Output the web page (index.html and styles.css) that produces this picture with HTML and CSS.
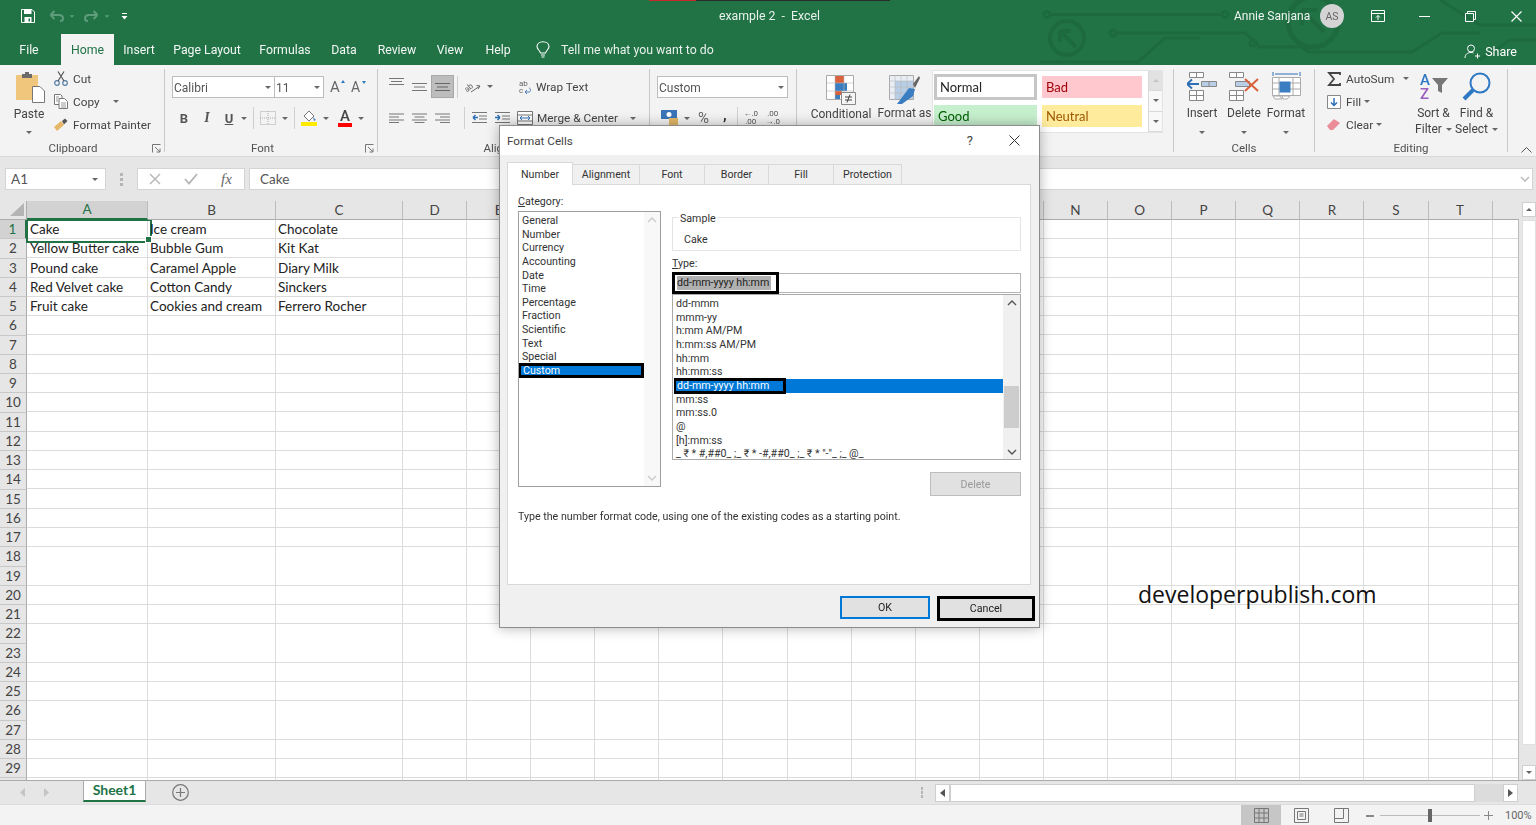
FILE: index.html
```html
<!DOCTYPE html>
<html lang="en">
<head>
<meta charset="utf-8">
<title>example 2 - Excel</title>
<link rel="stylesheet" href="styles.css">
</head>
<body>
<div class="app">
  <div class="head">
    <svg class="circuit" width="496" height="65" viewBox="0 0 496 65" fill="none" stroke="#1d6a3f" stroke-width="3">
      <path d="M10 14.500H182M76 33H205L220 47H262L268 52H372L402 33H440M0 62H98L125 38H160"/>
      <circle cx="7" cy="14.500" r="3"/><circle cx="185" cy="14.500" r="3"/><circle cx="73" cy="33" r="3"/><circle cx="213" cy="43" r="3"/>
      <circle cx="27" cy="38" r="17" stroke-width="4"/><path d="M20 31L36 47M20 31H31M20 31V42" stroke-width="4"/>
      <circle cx="273" cy="22" r="25" stroke-width="5"/><path d="M262 10L284 32M262 10H277M262 10V25" stroke-width="4"/>
      <path d="M400 0L440 25H496M440 60L470 40H496"/>
    </svg>
    <div class="topline"><span class="tl-red"></span><span class="tl-black"></span></div>
    <header class="titlebar">
      <div class="qat">
        <svg class="q-save" width="14" height="14" viewBox="0 0 14 14"><path d="M0.500 0.500H11L13.500 3V13.500H0.500Z" fill="#217346" stroke="#fff"/><path d="M3 1H10.500V5H3Z" fill="#fff"/><path d="M3.500 8H10.500V13H3.500Z" fill="#fff"/><path d="M7.500 9.500H9V12.500H7.500Z" fill="#217346"/></svg>
        <svg class="q-undo" width="15" height="12" viewBox="0 0 15 12" fill="none" stroke="#5d9d7c" stroke-width="2"><path d="M1.500 5H10C13 5 14 7 14 8.500C14 10 13 11 11 11M1.500 5L5.500 1M1.500 5L5.500 9"/></svg>
        <i class="caret dim"></i>
        <svg class="q-redo" width="15" height="12" viewBox="0 0 15 12" fill="none" stroke="#5d9d7c" stroke-width="2"><path d="M13.500 5H5C2 5 1 7 1 8.500C1 10 2 11 4 11M13.500 5L9.500 1M13.500 5L9.500 9"/></svg>
        <i class="caret dim"></i>
        <svg class="q-more" width="7" height="7" viewBox="0 0 7 7"><path d="M1 0H6V1H1ZM0.500 3H6.500L3.500 6.500Z" fill="#fff"/></svg>
      </div>
      <div class="doc-title">example 2 &nbsp;-&nbsp; Excel</div>
      <div class="account">Annie Sanjana</div>
      <div class="avatar">AS</div>
      <div class="winbtns">
        <svg width="14" height="12" viewBox="0 0 14 12" fill="none" stroke="#fff"><path d="M0.500 0.500H13.500V11.500H0.500ZM0.500 3.500H13.500M7 10V5.500M5 7.500L7 5.500L9 7.500"/></svg>
        <svg width="11" height="11" viewBox="0 0 11 11" fill="none" stroke="#fff"><path d="M0 5.500H11"/></svg>
        <svg width="11" height="11" viewBox="0 0 11 11" fill="none" stroke="#fff"><path d="M0.500 2.500H8.500V10.500H0.500ZM2.500 2.500V0.500H10.500V8.500H8.500"/></svg>
        <svg width="11" height="11" viewBox="0 0 11 11" fill="none" stroke="#fff" stroke-width="1.200"><path d="M0.500 0.500L10.500 10.500M10.500 0.500L0.500 10.500"/></svg>
      </div>
    </header>
    <nav class="tabs">
      <span class="tab first">File</span>
      <span class="tab active">Home</span>
      <span class="tab">Insert</span>
      <span class="tab">Page Layout</span>
      <span class="tab">Formulas</span>
      <span class="tab">Data</span>
      <span class="tab">Review</span>
      <span class="tab">View</span>
      <span class="tab">Help</span>
      <span class="tell">
        <svg width="14" height="17" viewBox="0 0 14 17" fill="none" stroke="#fff" stroke-width="1.100"><path d="M4.500 12C4 9.500 1 8.500 1 5.500C1 2.800 3.500 0.700 7 0.700C10.500 0.700 13 2.800 13 5.500C13 8.500 10 9.500 9.500 12ZM5 14H9M5.500 16H8.500"/></svg>
        Tell me what you want to do
      </span>
      <span class="share">
        <svg width="16" height="15" viewBox="0 0 16 15" fill="none" stroke="#fff"><circle cx="7" cy="4.500" r="3.500"/><path d="M1 14C1 10.500 3.500 8.500 7 8.500C8 8.500 9 8.700 9.500 9M11 12H16M13.500 9.500V14.500"/></svg>
        Share
      </span>
    </nav>
  </div>

  <section class="ribbon">
    <div class="group g-clip">
      <div class="body">
        <div class="paste">
          <svg width="29" height="31" viewBox="0 0 29 31"><path d="M0 3H22V28H0Z" fill="#efc67c"/><path d="M6 2H9V0H13V2H16V6H6Z" fill="#6b6b6b"/><path d="M16.500 14.500H24L28.500 19V30.500H16.500Z" fill="#fff" stroke="#777"/></svg>
          <span>Paste</span><i class="caret"></i>
        </div>
        <div class="stack">
          <div class="srow"><svg width="14" height="15" viewBox="0 0 14 15" fill="none" stroke="#5a7fa8" stroke-width="1.200"><circle cx="3" cy="12" r="2.300"/><circle cx="11" cy="12" r="2.300"/><path d="M4 10L10 0.500M10 10L4 0.500" stroke="#555"/></svg>Cut</div>
          <div class="srow"><svg width="14" height="15" viewBox="0 0 14 15" fill="#fff" stroke="#777"><path d="M0.500 0.500H6.500L8 2V10.500H0.500Z"/><path d="M5 4.500H10.500L13.500 7.500V14.500H5Z"/><path d="M2 3H5M2 5H4M2 7H4M7 9H12M7 11H12M7 13H12" fill="none" stroke="#999"/></svg>Copy<i class="caret sp"></i></div>
          <div class="srow"><svg width="14" height="14" viewBox="0 0 14 14"><path d="M0 9L7 3L10 7L3 13Z" fill="#e7b769"/><path d="M8 3L11 0.500L13.500 3L10 6.500Z" fill="#555"/></svg>Format Painter</div>
        </div>
      </div>
      <div class="glabel"><span>Clipboard</span><svg class="launch" width="9" height="9" viewBox="0 0 9 9" fill="none" stroke="#777"><path d="M0.500 8.500V0.500H8.500M3 3L8 8M8 4.500V8H4.500"/></svg></div>
    </div>

    <div class="group g-font">
      <div class="body col">
        <div class="frow r1">
          <div class="combo w103"><span>Calibri</span><i class="caret"></i></div>
          <div class="combo w51"><span>11</span><i class="caret"></i></div>
          <span class="growa">A<b class="up"></b></span>
          <span class="growa small">A<b class="dn"></b></span>
        </div>
        <div class="frow r2">
          <span class="fb">B</span><span class="fi">I</span><span class="fu">U</span><i class="caret"></i>
          <i class="vsep"></i>
          <svg width="16" height="14" viewBox="0 0 16 14" fill="none" stroke="#aaa" stroke-dasharray="1 1"><path d="M0.500 0.500H15.500V13.500H0.500ZM8 0V14M0 7H16"/></svg><i class="caret"></i>
          <i class="vsep"></i>
          <svg width="16" height="16" viewBox="0 0 16 16"><path d="M3 6L8 1L13 6L8 11Z" fill="#fff" stroke="#777"/><path d="M12 7L15 10L13 11Z" fill="#4a7ebb"/><path d="M0 12H16V16H0Z" fill="#ffeb00"/></svg><i class="caret"></i>
          <span class="fcolor">A</span><i class="caret"></i>
        </div>
      </div>
      <div class="glabel"><span>Font</span><svg class="launch" width="9" height="9" viewBox="0 0 9 9" fill="none" stroke="#777"><path d="M0.500 8.500V0.500H8.500M3 3L8 8M8 4.500V8H4.500"/></svg></div>
    </div>

    <div class="group g-align">
      <div class="body">
        <div class="alcol">
          <div class="alrow">
            <svg class="al top" width="15" height="8" viewBox="0 0 15 8" stroke="#777"><path d="M0 0.500H15M2 3.500H13M0 6.500H15"/></svg>
            <svg class="al" width="15" height="10" viewBox="0 0 15 10" stroke="#777"><path d="M0 1.500H15M2 5H13M0 8.500H15"/></svg>
            <span class="alactive"><svg width="15" height="10" viewBox="0 0 15 10" stroke="#666"><path d="M0 1.500H15M2 5H13M0 8.500H15"/></svg></span>
            <i class="vsep"></i>
            <svg class="orient" width="17" height="15" viewBox="0 0 17 15" fill="none" stroke="#666"><text class="tiny" x="0" y="12" transform="rotate(-40 3 10)">ab</text><path d="M6 13L15 7M15 7L11.500 6.500M15 7L13 10"/></svg><i class="caret"></i>
          </div>
          <div class="alrow two">
            <svg class="al" width="15" height="10" viewBox="0 0 15 10" stroke="#777"><path d="M0 1H15M0 4H10M0 7H15M0 9.500H10"/></svg>
            <svg class="al" width="15" height="10" viewBox="0 0 15 10" stroke="#777"><path d="M0 1H15M2.500 4H12.500M0 7H15M2.500 9.500H12.500"/></svg>
            <svg class="al" width="15" height="10" viewBox="0 0 15 10" stroke="#777"><path d="M0 1H15M5 4H15M0 7H15M5 9.500H15"/></svg>
            <i class="vsep"></i>
            <svg class="al" width="15" height="11" viewBox="0 0 15 11" fill="none" stroke="#777"><path d="M0 0.500H15M7 4H15M7 7H15M0 10.500H15"/><path d="M1 5.500H6M1 5.500L3.500 3M1 5.500L3.500 8" stroke="#2f6fb5" stroke-width="1.400"/></svg>
            <svg class="al" width="15" height="11" viewBox="0 0 15 11" fill="none" stroke="#777"><path d="M0 0.500H15M7 4H15M7 7H15M0 10.500H15"/><path d="M0 5.500H5M5 5.500L2.500 3M5 5.500L2.500 8" stroke="#2f6fb5" stroke-width="1.400"/></svg>
          </div>
        </div>
        <div class="wrapcol">
          <div class="srow"><svg class="wrapicon" width="13" height="14" viewBox="0 0 13 14" fill="none"><text class="tiny" x="0" y="6">ab</text><text class="tiny" x="0" y="13">c</text><path d="M6 12H10C12 12 12 8 10 8M6 12L8 10M6 12L8 14" stroke="#4a7ebb"/></svg>Wrap Text</div>
          <div class="srow low"><svg width="16" height="14" viewBox="0 0 16 14" fill="#fff" stroke="#777"><path d="M0.500 0.500H15.500V13.500H0.500ZM0 4H16M0 10H16"/><path d="M3 7H13M3 7L5 5M3 7L5 9M13 7L11 5M13 7L11 9" stroke="#2f6fb5" fill="none"/></svg>Merge &amp; Center<i class="caret sp"></i></div>
        </div>
      </div>
      <div class="glabel"><span>Alignment</span></div>
    </div>

    <div class="group g-num">
      <div class="body col">
        <div class="combo w131"><span>Custom</span><i class="caret"></i></div>
        <div class="numrow">
          <svg width="17" height="16" viewBox="0 0 17 16"><path d="M0 0H16V9H0Z" fill="#3a75b8"/><circle cx="8" cy="4.500" r="2.500" fill="#fff"/><path d="M8 8H17V16H8Z" fill="#e3b868"/></svg><i class="caret"></i>
          <span class="pct">%</span><span class="cma">,</span><i class="vsep"></i>
          <span class="dec">←.0<br>.00</span><span class="dec">.00<br>→.0</span>
        </div>
      </div>
      <div class="glabel"><span>Number</span></div>
    </div>

    <div class="group g-styles">
      <div class="body">
        <div class="bigbtn cond">
          <svg width="31" height="30" viewBox="0 0 31 30"><path d="M0.500 0.500H27.500V24.500H0.500Z" fill="#fff" stroke="#aaa"/><path d="M9 1H18V8H9Z" fill="#d9623c"/><path d="M9 8H21V16H9Z" fill="#3a7dc0"/><path d="M9 16H16V20H9Z" fill="#d9623c"/><path d="M9 20H14V24H9Z" fill="#3a7dc0"/><path d="M0 8H28M0 16H28M9 0V25M18 0V25" stroke="#bbb" fill="none" stroke-width="0.600"/><path d="M15.500 17.500H29.500V29.500H15.500Z" fill="#f5f5f5" stroke="#888"/><path d="M19 22H26M19 25H26M24 19.500L21 27.500" stroke="#444" fill="none"/></svg>
          <span>Conditional</span>
        </div>
        <div class="bigbtn fmtas">
          <svg width="31" height="29" viewBox="0 0 31 29"><path d="M0.500 0.500H24.500V24.500H0.500Z" fill="#e9eef5" stroke="#aaa"/><path d="M6 6H24V24H6Z" fill="#b8cde6"/><path d="M0 6H25M0 12H25M0 18H25M6 0V25M12 0V25M18 0V25" stroke="#bbb" stroke-width="0.600" fill="none"/><path d="M24 9L30 1L31 3L26 13Z" fill="#666"/><path d="M20 13L26 14L24 21L13 29H8Z" fill="#3a7dc0"/></svg>
          <span>Format as</span>
        </div>
        <div class="gallery">
          <div class="swatches">
            <div class="st normal">Normal</div>
            <div class="st bad">Bad</div>
            <div class="st good">Good</div>
            <div class="st neutral">Neutral</div>
          </div>
          <div class="gscroll">
            <span class="gb dis"><i class="caret up"></i></span>
            <span class="gb"><i class="caret"></i></span>
            <span class="gb more"><i class="caret"></i></span>
          </div>
        </div>
      </div>
      <div class="glabel"><span>Styles</span></div>
    </div>

    <div class="group g-cells">
      <div class="body">
        <div class="cellbtn">
          <svg width="30" height="29" viewBox="0 0 30 29" fill="#fff" stroke="#888"><path d="M2.500 0.500H16.500V5.500H2.500ZM9.500 0V6"/><path d="M14.500 9.500H29.500V14.500H14.500ZM22 9V15" fill="#b8cde6"/><path d="M2.500 18.500H16.500V28.500H2.500ZM9.500 18V29M2 23.500H17"/><path d="M0 12H12M0 12L5 7.500M0 12L5 16.500" stroke="#2f6fb5" stroke-width="2" fill="none"/></svg>
          <span>Insert</span><i class="caret"></i>
        </div>
        <div class="cellbtn">
          <svg width="30" height="29" viewBox="0 0 30 29" fill="#fff" stroke="#888"><path d="M0.500 0.500H14.500V5.500H0.500ZM7.500 0V6"/><path d="M6.500 9.500H20.500V14.500H6.500Z" fill="#b8cde6"/><path d="M0.500 18.500H14.500V28.500H0.500ZM7.500 18V29M0 23.500H15"/><path d="M16 7L29 19M29 7L16 19" stroke="#d9623c" stroke-width="2" fill="none"/></svg>
          <span>Delete</span><i class="caret"></i>
        </div>
        <div class="cellbtn">
          <svg width="29" height="29" viewBox="0 0 29 29" fill="#fff" stroke="#aaa"><path d="M0.500 5.500H28.500V23.500H0.500Z"/><path d="M7 5V24M21 5V24M0 11H29M0 17H29" fill="none"/><path d="M7.500 9.500H18.500V20.500H7.500Z" fill="#3a7dc0" stroke="none"/><path d="M1 0V4M28 0V4M3 2H26" stroke="#2f6fb5" fill="none"/><path d="M1 24H8L10 27H3ZM10 24H18L15 27H11Z" /></svg>
          <span>Format</span><i class="caret"></i>
        </div>
      </div>
      <div class="glabel"><span>Cells</span></div>
    </div>

    <div class="group g-edit">
      <div class="body">
        <div class="stack edit">
          <div class="srow"><svg width="14" height="14" viewBox="0 0 14 14" fill="none" stroke="#444" stroke-width="1.800"><path d="M13 3V1H2L7 7L2 13H13V11"/></svg>AutoSum<i class="caret far"></i></div>
          <div class="srow"><svg width="14" height="14" viewBox="0 0 14 14" fill="#fff" stroke="#888"><path d="M0.500 0.500H13.500V13.500H0.500Z"/><path d="M7 3V10M4 7.500L7 10.500L10 7.500" stroke="#2f6fb5" stroke-width="1.500" fill="none"/></svg>Fill<i class="caret tight"></i></div>
          <div class="srow"><svg width="14" height="13" viewBox="0 0 14 13"><path d="M0 8L7 1L13 5L6 12H3Z" fill="#ea8d98"/></svg>Clear<i class="caret tight"></i></div>
        </div>
        <div class="editbtn sort">
          <svg class="azicon" width="29" height="28" viewBox="0 0 29 28"><text class="az a" x="1" y="13">A</text><text class="az z" x="1" y="27">Z</text><path d="M13 6H29L23 13V21L19 19V13Z" fill="#777"/></svg>
          <span>Sort &amp;</span><span>Filter<i class="caret near"></i></span>
        </div>
        <div class="editbtn find">
          <svg width="29" height="29" viewBox="0 0 29 29" fill="none" stroke="#2f78c4"><circle cx="18" cy="11" r="9.500" stroke-width="2"/><path d="M11 18L2 27" stroke-width="4"/></svg>
          <span>Find &amp;</span><span>Select<i class="caret near"></i></span>
        </div>
      </div>
      <div class="glabel"><span>Editing</span></div>
    </div>
    <svg class="collapse" width="11" height="6" viewBox="0 0 11 6" fill="none" stroke="#555"><path d="M0.500 5.500L5.500 0.500L10.500 5.500"/></svg>
  </section>

  <div class="fbar">
    <div class="namebox"><span>A1</span><i class="caret"></i></div>
    <div class="dots"><i></i><i></i><i></i></div>
    <div class="fxbtns">
      <svg width="12" height="12" viewBox="0 0 12 12" stroke="#b5b5b5" stroke-width="1.400"><path d="M1 1L11 11M11 1L1 11"/></svg>
      <svg width="14" height="12" viewBox="0 0 14 12" fill="none" stroke="#b5b5b5" stroke-width="1.800"><path d="M1 6L5 10.500L13 1"/></svg>
      <span class="fx">fx</span>
    </div>
    <div class="formula"><span>Cake</span><svg width="10" height="6" viewBox="0 0 10 6" fill="none" stroke="#bbb" stroke-width="1.500"><path d="M1 1L5 5L9 1"/></svg></div>
  </div>

  <div class="sheet">
    <div class="colheads">
      <div class="corner"><svg width="14" height="13" viewBox="0 0 14 13"><path d="M14 0V13H0Z" fill="#b4b4b4"/></svg></div>
      <div class="ch ca sel">A</div><div class="ch cb">B</div><div class="ch cc">C</div>
      <div class="ch">D</div><div class="ch">E</div><div class="ch">F</div><div class="ch">G</div><div class="ch">H</div><div class="ch">I</div><div class="ch">J</div><div class="ch">K</div><div class="ch">L</div><div class="ch">M</div><div class="ch">N</div><div class="ch">O</div><div class="ch">P</div><div class="ch">Q</div><div class="ch">R</div><div class="ch">S</div><div class="ch">T</div><div class="ch cu"></div>
      <div class="vbtn"><i class="caret up"></i></div>
    </div>
    <div class="sbody">
      <div class="rowheads">
        <div class="rh sel">1</div><div class="rh">2</div><div class="rh">3</div><div class="rh">4</div><div class="rh">5</div><div class="rh">6</div><div class="rh">7</div><div class="rh">8</div><div class="rh">9</div><div class="rh">10</div><div class="rh">11</div><div class="rh">12</div><div class="rh">13</div><div class="rh">14</div><div class="rh">15</div><div class="rh">16</div><div class="rh">17</div><div class="rh">18</div><div class="rh">19</div><div class="rh">20</div><div class="rh">21</div><div class="rh">22</div><div class="rh">23</div><div class="rh">24</div><div class="rh">25</div><div class="rh">26</div><div class="rh">27</div><div class="rh">28</div><div class="rh">29</div><div class="rh"></div>
      </div>
      <div class="cells">
        <div class="c ca">
          <div class="cell active">Cake</div><div class="cell">Yellow Butter cake</div><div class="cell">Pound cake</div><div class="cell">Red Velvet cake</div><div class="cell">Fruit cake</div>
        </div>
        <div class="c cb">
          <div class="cell">Ice cream</div><div class="cell">Bubble Gum</div><div class="cell">Caramel Apple</div><div class="cell">Cotton Candy</div><div class="cell">Cookies and cream</div>
        </div>
        <div class="c cc">
          <div class="cell">Chocolate</div><div class="cell">Kit Kat</div><div class="cell">Diary Milk</div><div class="cell">Sinckers</div><div class="cell">Ferrero Rocher</div>
        </div>
        <div class="c"></div><div class="c"></div><div class="c"></div><div class="c"></div><div class="c"></div><div class="c"></div><div class="c"></div><div class="c"></div><div class="c"></div><div class="c"></div><div class="c"></div><div class="c"></div><div class="c"></div><div class="c"></div><div class="c"></div><div class="c"></div><div class="c"></div><div class="c cu"></div>
      </div>
      <div class="vscroll">
        <div class="vthumb"></div>
        <div class="vbtn down"><i class="caret"></i></div>
      </div>
      <div class="watermark">developerpublish.com</div>
    </div>
  </div>

  <div class="sheetbar">
    <svg class="nav" width="30" height="9" viewBox="0 0 30 9" fill="#c4c4c4"><path d="M5 0V9L0 4.500ZM24 0V9L29 4.500Z"/></svg>
    <div class="sheettab">Sheet1</div>
    <svg class="addsheet" width="17" height="17" viewBox="0 0 17 17" fill="none" stroke="#777" stroke-width="1.200"><circle cx="8.500" cy="8.500" r="7.800"/><path d="M8.500 4V13M4 8.500H13"/></svg>
    <div class="dots small"><i></i><i></i><i></i></div>
    <div class="hscroll">
      <span class="hbtn"><svg width="5" height="8" viewBox="0 0 5 8" fill="#555"><path d="M5 0V8L0 4Z"/></svg></span>
      <span class="hthumb"></span>
      <span class="htrack"></span>
      <span class="hbtn"><svg width="5" height="8" viewBox="0 0 5 8" fill="#555"><path d="M0 0V8L5 4Z"/></svg></span>
    </div>
  </div>

  <footer class="status">
    <span class="view on"><svg width="15" height="15" viewBox="0 0 15 15" fill="none" stroke="#777"><path d="M0.500 0.500H14.500V14.500H0.500ZM5 0V15M10 0V15M0 5H15M0 10H15"/></svg></span>
    <span class="view"><svg width="15" height="15" viewBox="0 0 15 15" fill="none" stroke="#777"><path d="M0.500 0.500H14.500V14.500H0.500ZM3.500 3.500H11.500V11.500H3.500ZM5.500 6H9.500M5.500 8H9.500"/></svg></span>
    <span class="view"><svg width="15" height="15" viewBox="0 0 15 15" fill="none" stroke="#777"><path d="M0.500 0.500H14.500V14.500H0.500ZM0 10.500H9.500V0"/></svg></span>
    <span class="zminus"></span>
    <span class="zslider"><i></i></span>
    <svg class="zplus" width="9" height="9" viewBox="0 0 9 9" stroke="#888"><path d="M0 4.500H9M4.500 0V9"/></svg>
    <span class="zpct">100%</span>
  </footer>

  <div class="dialog" role="dialog" aria-label="Format Cells">
    <div class="dlg-title">
      <span>Format Cells</span>
      <span class="help">?</span>
      <svg width="11" height="11" viewBox="0 0 11 11" fill="none" stroke="#333"><path d="M0.500 0.500L10.500 10.500M10.500 0.500L0.500 10.500"/></svg>
    </div>
    <div class="dlg-body">
      <div class="dtabs">
        <span class="dtab on w66">Number</span><span class="dtab w67">Alignment</span><span class="dtab w65">Font</span><span class="dtab w64">Border</span><span class="dtab w65">Fill</span><span class="dtab w68">Protection</span>
      </div>
      <div class="panel">
        <div class="columns">
          <div class="leftcol">
            <div class="lbl"><u>C</u>ategory:</div>
            <div class="catlist">
              <div class="catitems">
                <div class="it">General</div><div class="it">Number</div><div class="it">Currency</div><div class="it">Accounting</div><div class="it">Date</div><div class="it">Time</div><div class="it">Percentage</div><div class="it">Fraction</div><div class="it">Scientific</div><div class="it">Text</div><div class="it">Special</div>
                <div class="catsel">Custom</div>
              </div>
              <div class="dscroll dim">
                <svg width="10" height="6" viewBox="0 0 10 6" fill="none" stroke="#ccc" stroke-width="1.400"><path d="M1 5L5 1L9 5"/></svg>
                <svg width="10" height="6" viewBox="0 0 10 6" fill="none" stroke="#ccc" stroke-width="1.400"><path d="M1 1L5 5L9 1"/></svg>
              </div>
            </div>
          </div>
          <div class="rightcol">
            <fieldset class="sample"><legend>Sample</legend><div>Cake</div></fieldset>
            <div class="lbl type"><u>T</u>ype:</div>
            <div class="typebox"><span class="typemark"><span>dd-mm-yyyy hh:mm</span></span></div>
            <div class="fmtlist">
              <div class="fmtitems">
                <div class="it">dd-mmm</div><div class="it">mmm-yy</div><div class="it">h:mm AM/PM</div><div class="it">h:mm:ss AM/PM</div><div class="it">hh:mm</div><div class="it">hh:mm:ss</div>
                <div class="fmtsel"><span>dd-mm-yyyy hh:mm</span></div>
                <div class="it">mm:ss</div><div class="it">mm:ss.0</div><div class="it">@</div><div class="it">[h]:mm:ss</div><div class="it">_ ₹ * #,##0_ ;_ ₹ * -#,##0_ ;_ ₹ * "-"_ ;_ @_</div>
              </div>
              <div class="dscroll">
                <svg width="10" height="6" viewBox="0 0 10 6" fill="none" stroke="#555" stroke-width="1.400"><path d="M1 5L5 1L9 5"/></svg>
                <span class="dthumb"></span>
                <svg width="10" height="6" viewBox="0 0 10 6" fill="none" stroke="#555" stroke-width="1.400"><path d="M1 1L5 5L9 1"/></svg>
              </div>
            </div>
            <div class="delrow"><span class="delete">Delete</span></div>
          </div>
        </div>
        <p class="desc">Type the number format code, using one of the existing codes as a starting point.</p>
      </div>
      <div class="dlg-foot">
        <span class="btn ok">OK</span>
        <span class="btn cancel">Cancel</span>
      </div>
    </div>
  </div>
</div>
</body>
</html>
```
FILE: styles.css
```css
* { box-sizing: border-box; }
html, body { margin: 0; padding: 0; }
body { font-family: Roboto, "Liberation Sans", sans-serif; font-size: 12px; color: #444; background: #fff; }
.app { width: 1536px; height: 825px; position: relative; overflow: hidden; display: flex; flex-direction: column; filter: blur(.3px); }
svg { flex: none; display: block; }
i { font-style: normal; }
.caret { display: inline-block; flex: none; width: 0; height: 0; border-left: 3.5px solid transparent; border-right: 3.5px solid transparent; border-top: 3.5px solid #666; }
.caret.up { border-top: 0; border-bottom: 3.5px solid #666; }
.caret.dim { border-top-color: #5d9d7c; }
.caret.sp { margin-left: 9px; }
.caret.near { margin-left: 4px; vertical-align: 2px; }
.caret.tight { margin-left: -1px; }
.caret.far { margin-left: 5px; }
.tiny { font-family: Roboto, sans-serif; font-size: 8px; fill: #666; stroke: none; }

/* head */
.head { height: 65px; background: #217346; position: relative; color: #fff; flex: none; }
.circuit { position: absolute; right: 0; top: 0; }
.topline { position: absolute; left: 649px; top: 0; display: flex; height: 1px; }
.tl-red { width: 47px; background: #c8282a; }
.tl-black { width: 194px; background: #2b2b2b; }
.titlebar { height: 32px; display: flex; align-items: center; position: relative; }
.qat { width: 719px; display: flex; align-items: center; padding-left: 21px; }
.q-undo { margin-left: 14px; }
.qat .caret.dim { margin-left: 5px; transform: scale(.8); }
.q-redo { margin-left: 9px; }
.q-more { margin-left: 11px; }
.doc-title { width: 515px; font-size: 12.3px; color: #e8f0eb; margin-top: -1px; }
.account { width: 86px; font-size: 12px; color: #f0f5f2; margin-top: -1px; }
.avatar { width: 24px; height: 24px; border-radius: 50%; background: #d4d4d4; color: #666; font-size: 10.5px; display: flex; align-items: center; justify-content: center; }
.winbtns { display: flex; align-items: center; margin-left: 27px; }
.winbtns svg:nth-child(2) { margin-left: 34px; }
.winbtns svg:nth-child(3) { margin-left: 35px; }
.winbtns svg:nth-child(4) { margin-left: 35px; }
.tabs { height: 33px; display: grid; grid-template-columns: 61px 53px 50px 86px 70px 48px 58px 48px 48px 1fr auto; align-items: center; position: relative; }
.tab { text-align: center; font-size: 12.3px; color: #f3f7f5; line-height: 33px; height: 31px; margin-top: 2px; }
.tab.first { padding-right: 3px; }
.tab.active { background: #f3f3f3; color: #217346; }
.tell { display: flex; align-items: center; gap: 11px; font-size: 12.3px; color: #e8f0eb; padding-left: 14px; margin-top: 2px; }
.share { display: flex; align-items: center; gap: 5px; font-size: 12.5px; padding-right: 19px; padding-top: 6px; }

/* ribbon */
.ribbon { height: 92px; flex: none; display: flex; background: #f3f3f3; border-bottom: 1px solid #d9d9d9; position: relative; padding-top: 4px; }
.group { height: 83px; flex: none; border-right: 1px solid #c9c9c9; display: flex; flex-direction: column; }
.body { height: 71px; flex: none; display: flex; }
.col { flex-direction: column; }
.glabel { height: 16px; flex: none; line-height: 16px; font-size: 11.5px; color: #505050; display: flex; align-items: center; justify-content: center; position: relative; }
.launch { position: absolute; right: 3px; top: 4px; }
.g-clip { width: 165px; }
.g-clip .glabel { padding-right: 18px; }
.g-font { width: 213px; }
.g-font .glabel { padding-right: 17px; }
.g-align { width: 272px; }
.g-align .glabel { padding-right: 8px; }
.g-num { width: 147px; }
.g-styles { width: 377px; }
.g-cells { width: 141px; }
.g-edit { width: 193px; }
.paste { width: 34px; margin-left: 12px; display: flex; flex-direction: column; align-items: center; padding-top: 3px; font-size: 12px; flex: none; }
.paste svg { margin-left: 3px; }
.paste span { margin-top: 3px; line-height: 16px; }
.paste .caret { margin-top: 9px; }
.stack { margin-left: 0; display: flex; flex-direction: column; margin-top: -2px; padding-left: 8px; }
.srow { height: 23px; display: flex; align-items: center; gap: 4px; font-size: 11.8px; color: #444; white-space: nowrap; }
.srow svg { margin-right: 1px; }
.frow { display: flex; align-items: center; }
.r1 { height: 22px; margin: 7px 0 0 7px; }
.combo { height: 22px; background: #fff; border: 1px solid #bdbdbd; display: flex; align-items: center; justify-content: space-between; padding: 0 3px 0 1px; font-size: 12px; color: #555; flex: none; }
.combo span { margin-top: 1px; }
.w103 { width: 103px; }
.w51 { width: 50px; margin-left: -1px; }
.w131 { width: 131px; margin: 7px 0 0 7px; }
.growa { font-size: 15px; color: #666; margin-left: 6px; width: 13px; position: relative; font-weight: 400; }
.growa.small { margin-left: 8px; font-size: 14px; }
.growa b { position: absolute; right: -2px; top: 2px; width: 0; height: 0; border-left: 2.500px solid transparent; border-right: 2.500px solid transparent; }
.growa .up { border-bottom: 3px solid #2f78c4; }
.growa .dn { border-top: 3px solid #2f78c4; }
.r2 { height: 22px; margin: 9px 0 0 13px; }
.fb, .fi, .fu { font-size: 13px; color: #555; font-weight: 700; width: 12px; text-align: center; }
.fi { font-style: italic; font-family: "Liberation Serif", serif; margin-left: 11px; font-size: 14px; }
.fu { text-decoration: underline; margin-left: 10px; }
.r2 .caret { margin-left: 6px; }
.vsep { width: 1px; height: 22px; background: #d0d0d0; flex: none; margin: 0 6px 0 6px; display: block; }
.fcolor { font-size: 15px; font-weight: 500; color: #444; border-bottom: 4px solid #f00; line-height: 14px; margin-left: 9px; padding: 0 2px; height: 18px; }
.alcol { margin-left: 11px; width: 121px; flex: none; }
.alrow { display: flex; align-items: center; height: 23px; margin-top: 6px; }
.alrow .al { margin-right: 8px; }
.alrow .al.top { align-self: flex-start; margin-top: 3px; }
.alrow .caret { margin-left: 5px; }
.alrow.two { margin-top: 8px; margin-left: 0; }
.alactive { width: 23px; height: 23px; background: #bdbdbd; border: 1px solid #a8a8a8; display: flex; align-items: center; justify-content: center; margin-left: -4px; margin-right: -3px; }
.alrow .vsep { margin: 0 7px 0 6px; }
.wrapcol { margin-left: 9px; display: flex; flex-direction: column; margin-top: 6px; }
.wrapcol .srow { height: 24px; gap: 3px; }
.wrapcol .low { margin-top: 7px; margin-left: -2px; }
.numrow { display: flex; align-items: center; margin: 9px 0 0 11px; height: 22px; }
.numrow .caret { margin-left: 6px; }
.pct { font-size: 15px; color: #666; margin-left: 8px; }
.cma { font-size: 15px; color: #333; font-weight: 700; margin-left: 14px; margin-top: -6px; }
.numrow .vsep { margin: 0 2px 0 10px; }
.dec { font-size: 8px; line-height: 8px; color: #555; width: 22px; text-align: center; }
.bigbtn { flex: none; display: flex; flex-direction: column; align-items: center; padding-top: 6px; font-size: 12px; white-space: nowrap; }
.bigbtn span { margin-top: 2px; line-height: 15px; }
.cond { width: 70px; margin-left: 9px; }
.fmtas { width: 57px; }
.gallery { width: 231px; height: 63px; margin: 1px 0 0 -1px; background: #fff; border: 1px solid #e4e4e4; display: flex; }
.swatches { width: 215px; display: grid; grid-template-columns: 103px 100px; grid-auto-rows: 22px; column-gap: 5px; row-gap: 7px; padding: 5px 0 0 1px; align-content: start; }
.st { font-size: 13px; padding-left: 4px; line-height: 22px; font-family: Lato, sans-serif; }
.normal { background: #fff; border: 3px solid #c6c6c6; color: #222; height: 26px; margin-top: -2px; line-height: 20px; padding-left: 3px; }
.bad { background: #ffc7ce; color: #9c0006; }
.good { background: #c6efce; color: #006100; height: 20px; }
.neutral { background: #ffeb9c; color: #9c5700; }
.gscroll { width: 14px; display: flex; flex-direction: column; flex: none; }
.gb { flex: 1; background: #f8f8f8; border-bottom: 1px solid #d9d9d9; border-left: 1px solid #d9d9d9; display: flex; align-items: center; justify-content: center; }
.gb.dis { background: #e2e2e2; }
.gb.dis .caret { border-bottom-color: #c4c4c4; }
.cellbtn { width: 42px; display: flex; flex-direction: column; align-items: center; padding-top: 3px; font-size: 12px; }
.g-cells .body { padding-left: 7px; }
.cellbtn span { margin-top: 5px; line-height: 15px; }
.cellbtn .caret { margin-top: 10px; }
.stack.edit { width: 97px; padding-left: 12px; flex: none; }
.editbtn { width: 43px; display: flex; flex-direction: column; align-items: center; padding-top: 3px; font-size: 12px; white-space: nowrap; }
.editbtn span { line-height: 16px; }
.editbtn svg { margin-bottom: 5px; }
.editbtn.find svg { margin-bottom: 4px; }
.azicon { overflow: visible; }
.az { font-family: Roboto, sans-serif; font-size: 15px; font-weight: 500; }
.az.a { fill: #2f78c4; }
.az.z { fill: #9b5fc0; }
.collapse { position: absolute; right: 4px; top: 82px; }

/* formula bar */
.fbar { height: 44px; flex: none; background: #e6e6e6; display: flex; padding: 11px 3px 0 5px; align-items: flex-start; }
.namebox { width: 101px; height: 22px; background: #fff; border: 1px solid #d4d4d4; display: flex; align-items: center; justify-content: space-between; padding: 0 7px 0 5px; font: 13.5px Lato, sans-serif; color: #555; }
.namebox span, .formula span { margin-top: -1px; }
.dots { width: 31px; height: 22px; display: flex; flex-direction: column; gap: 2px; align-items: center; justify-content: center; }
.dots i { width: 3px; height: 3px; background: #b5b5b5; display: block; }
.fxbtns { width: 108px; height: 22px; background: #fff; border: 1px solid #d4d4d4; display: flex; align-items: center; padding-left: 11px; }
.fxbtns svg:nth-child(2) { margin-left: 23px; }
.fx { font: italic 15px "Liberation Serif", serif; color: #666; margin-left: 23px; }
.formula { flex: 1; height: 22px; margin-left: 4px; background: #fff; border: 1px solid #d4d4d4; display: flex; align-items: center; justify-content: space-between; padding: 0 2px 0 10px; font: 13.5px Lato, sans-serif; color: #555; }

/* sheet */
.sheet { height: 580px; flex: none; display: flex; flex-direction: column; background: #fff; }
.colheads { height: 19px; display: flex; background: #e6e6e6; flex: none; }
.corner { width: 27px; display: flex; justify-content: flex-end; align-items: flex-end; padding: 0 2px 3px 0; border-bottom: 1px solid #ababab; border-right: 1px solid #ababab; flex: none; }
.ch { width: 64.1px; flex: none; text-align: center; font: 13.5px/18px Lato, sans-serif; color: #444; border-right: 1px solid #bcbcbc; border-bottom: 1px solid #ababab; }
.ch.ca { width: 121px; }
.ch.cb { width: 128px; }
.ch.cc { width: 127px; }
.ch.cu { width: 26.3px; border-right: 0; background: #e6e6e6; border-bottom: 1px solid #ababab; }
.ch.sel { background: #d2d2d2; color: #217346; border-bottom: 2px solid #217346; line-height: 17px; }
.vbtn { width: 14px; height: 15px; margin: 1px 0 0 3px; background: #fff; border: 1px solid #cfcfcf; display: flex; align-items: center; justify-content: center; flex: none; }
.sbody { flex: 1; display: flex; position: relative; border-bottom: 1px solid #aaa; overflow: hidden; }
.rowheads { width: 27px; flex: none; background: #e6e6e6; }
.rh { height: 19.25px; text-align: center; font: 13.5px/18px Lato, sans-serif; color: #444; border-right: 1px solid #ababab; border-bottom: 1px solid #c8c8c8; }
.rh.sel { background: #d2d2d2; color: #217346; border-right: 2px solid #217346; }
.cells { width: 1492px; flex: none; display: flex; background: repeating-linear-gradient(to bottom, #fff 0, #fff 18.25px, #dcdcdc 18.25px, #dcdcdc 19.25px); border-right: 1px solid #bbb; }
.c { width: 64.1px; flex: none; border-right: 1px solid #dcdcdc; }
.c.ca { width: 121px; }
.c.cb { width: 128px; }
.c.cc { width: 127px; }
.c.cu { width: 25.3px; border-right: 0; }
.cell { height: 19.25px; font: 13.5px/18px Lato, sans-serif; color: #222; padding-left: 2px; white-space: nowrap; position: relative; }
.ca .cell { padding-left: 3px; }
.cell.active::after { content: ""; position: absolute; left: -1px; top: -1px; width: 122px; height: 20px; border: 2px solid #217346; }
.cell.active::before { content: ""; position: absolute; left: 118px; top: 16px; width: 5px; height: 5px; background: #217346; border: 1px solid #fff; z-index: 1; }
.vscroll { flex: 1; display: flex; flex-direction: column; background: #e6e6e6; padding-left: 3px; }
.vthumb { width: 14px; height: 525px; background: #fff; border: 1px solid #e0e0e0; }
.vbtn.down { margin: auto 0 0; }
.watermark { position: absolute; left: 1138px; top: 359px; font: 23px/30px "Open Sans", sans-serif; color: #111; }

/* sheet tabs */
.sheetbar { height: 23px; flex: none; background: #e6e6e6; display: flex; align-items: center; }
.nav { margin-left: 20px; }
.sheettab { width: 63px; height: 21px; margin: -2px 0 0 33px; background: #fff; border-left: 1px solid #aaa; border-right: 1px solid #aaa; border-bottom: 2px solid #217346; color: #217346; font: 700 14px/18px Lato, sans-serif; text-align: center; }
.addsheet { margin-left: 26px; }
.dots.small { width: 10px; margin-left: 728px; gap: 1px; }
.dots.small i { width: 2px; height: 3px; }
.hscroll { width: 583px; height: 18px; margin-left: 8px; display: flex; }
.hbtn { width: 15px; background: #fff; border: 1px solid #cfcfcf; display: flex; align-items: center; justify-content: center; flex: none; }
.hthumb { width: 525px; background: #fff; border: 1px solid #cfcfcf; flex: none; }
.htrack { flex: 1; background: #dcdcdc; }

/* status */
.status { flex: 1; background: #f3f3f3; display: flex; align-items: center; padding-left: 1241px; border-top: 1px solid #dcdcdc; }
.view { width: 40px; height: 21px; display: flex; align-items: center; justify-content: center; }
.view.on { background: #c6c6c6; }
.zminus { width: 8px; height: 2px; background: #888; margin-left: 5px; }
.zslider { width: 100px; height: 1px; background: #bbb; margin-left: 6px; position: relative; }
.zslider i { position: absolute; left: 48px; top: -6px; width: 4px; height: 13px; background: #666; }
.zplus { margin-left: 4px; }
.zpct { font-size: 11px; color: #666; margin-left: 12px; }

/* dialog */
.dialog { position: absolute; left: 499px; top: 125px; width: 541px; height: 503px; background: #f0f0f0; border: 1px solid #8c8c8c; box-shadow: 0 0 12px rgba(0,0,0,.3); display: flex; flex-direction: column; font-size: 10.65px; color: #333; }
.dlg-title { height: 29px; background: #fff; display: flex; align-items: center; padding: 0 19px 0 7px; font-size: 11.7px; flex: none; color: #444; }
.dlg-title span:first-child { flex: 1; }
.help { margin-right: 36px; font-size: 13px; }
.dlg-body { flex: 1; padding: 7px 9px 0 7px; display: flex; flex-direction: column; }
.dtabs { display: flex; align-items: flex-end; height: 23px; flex: none; margin-bottom: -1px; position: relative; }
.dtab { height: 21px; line-height: 20px; text-align: center; background: #f0f0f0; border: 1px solid #d9d9d9; border-left: 0; flex: none; }
.dtab.on { height: 23px; background: #fff; border-left: 1px solid #d9d9d9; border-bottom: 0; line-height: 23px; }
.w66 { width: 66px; }
.w67 { width: 67px; }
.w65 { width: 65px; }
.w64 { width: 64px; }
.w68 { width: 68px; }
.panel { height: 401px; width: 524px; background: #fff; border: 1px solid #d9d9d9; padding: 0 0 0 10px; flex: none; }
.columns { display: flex; gap: 11px; }
.leftcol { width: 143px; flex: none; }
.rightcol { width: 349px; flex: none; padding-top: 32px; }
.lbl { height: 14px; line-height: 14px; margin-top: 10px; margin-bottom: 2px; }
.lbl.type { margin: 6px 0 2px; }
.catlist { height: 276px; border: 1px solid #9e9e9e; display: flex; overflow: hidden; }
.catitems { width: 125px; flex: none; padding-top: 2px; }
.it { height: 13.65px; line-height: 13.65px; padding-left: 3px; white-space: nowrap; }
.catsel { height: 15px; margin-top: -1px; border: 3px solid #000; border-left-width: 2px; background: #0078d7; color: #fff; line-height: 9px; padding-left: 2px; overflow: hidden; }
.dscroll { flex: 1; background: #f0f0f0; display: flex; flex-direction: column; align-items: center; justify-content: space-between; padding: 5px 0; }
.dscroll.dim { background: #f8f8f8; }
.sample { margin: 0; padding: 0 0 0 11px; border: 1px solid #e4e4e4; min-width: 0; line-height: 14px; margin-top: -7px; height: 41px; }
.sample legend { padding: 0 1px; margin-left: -5px; position: relative; top: 2px; }
.sample div { margin-top: 9px; }
.typebox { height: 20px; border: 1px solid #b5b5b5; position: relative; }
.typemark { display: block; width: 107px; height: 22px; margin: -2px 0 0 -1px; border: 3px solid #000; padding: 1px 0 0 2px; line-height: 14px; }
.typemark span { display: block; background: #b0b0b0; width: 94px; height: 14px; color: #222; white-space: nowrap; }
.fmtlist { height: 166px; margin-top: 1px; border: 1px solid #aaa; display: flex; overflow: hidden; }
.fmtitems { width: 330px; flex: none; padding-top: 2px; }
.fmtsel { height: 14px; margin: 0 0 0 1px; background: #0078d7; color: #fff; position: relative; }
.fmtsel span { display: block; width: 112px; height: 16px; margin-top: -1px; position: absolute; top: 0; left: 0; border: 3px solid #000; border-left-width: 2px; background: #0078d7; padding-left: 1px; line-height: 10px; overflow: hidden; white-space: nowrap; }
.dscroll:not(.dim) { padding: 5px 0 4px; background: #f0f0f0; }
.dthumb { width: 15px; height: 43px; background: #cdcdcd; margin-top: 80px; margin-bottom: 21px; }
.delrow { display: flex; justify-content: flex-end; margin-top: 12px; }
.delete { width: 91px; height: 24px; line-height: 24px; text-align: center; color: #999; background: #e1e1e1; border: 1px solid #bdbdbd; }
.desc { margin: 14px 0 0 0; line-height: 14px; white-space: nowrap; }
.dlg-foot { display: flex; justify-content: flex-end; gap: 7px; padding-top: 11px; align-items: flex-start; margin-right: -5px; }
.btn { text-align: center; background: #e1e1e1; color: #222; }
.ok { width: 90px; height: 23px; border: 2px solid #0078d7; line-height: 20px; }
.cancel { width: 98px; height: 25px; border: 3px solid #000; line-height: 19px; }
```
